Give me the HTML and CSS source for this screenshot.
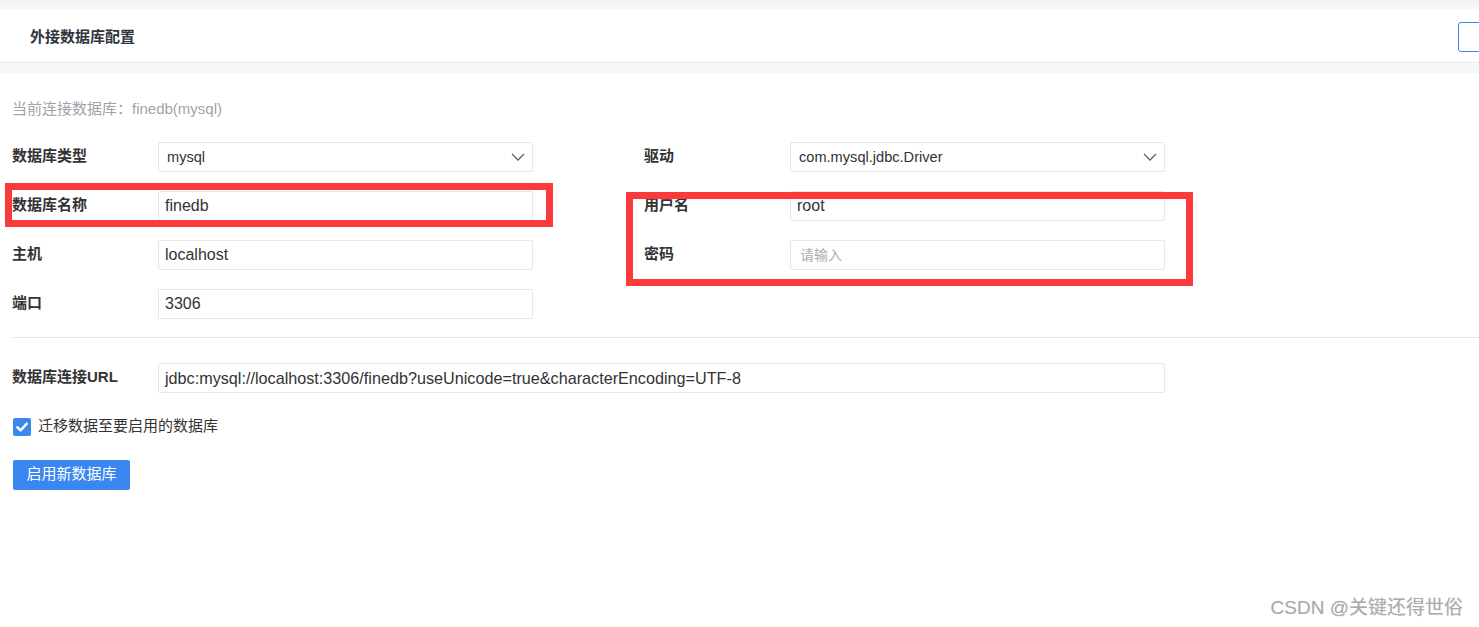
FILE: index.html
```html
<!DOCTYPE html>
<html lang="zh-CN">
<head>
<meta charset="utf-8">
<title>外接数据库配置</title>
<link rel="stylesheet" href="styles.css">
</head>
<body>
<div class="topbar"></div>
<header class="header">
  <div class="title">外接数据库配置</div>
  <button class="header-btn" type="button"></button>
</header>
<div class="band"></div>
<main class="content">
  <div class="current">当前连接数据库：finedb(mysql)</div>
  <div class="form-grid">
    <div class="field">
      <label class="label">数据库类型</label>
      <div class="select"><span>mysql</span>
        <svg class="chev" width="14" height="8" viewBox="0 0 14 8"><polyline points="1,1 7,7 13,1" fill="none" stroke="#56657a" stroke-width="1.3"/></svg>
      </div>
    </div>
    <div class="field right">
      <label class="label">驱动</label>
      <div class="select"><span>com.mysql.jdbc.Driver</span>
        <svg class="chev" width="14" height="8" viewBox="0 0 14 8"><polyline points="1,1 7,7 13,1" fill="none" stroke="#56657a" stroke-width="1.3"/></svg>
      </div>
    </div>
    <div class="field">
      <label class="label">数据库名称</label>
      <div class="input">finedb</div>
    </div>
    <div class="field right">
      <label class="label">用户名</label>
      <div class="input">root</div>
    </div>
    <div class="field">
      <label class="label">主机</label>
      <div class="input">localhost</div>
    </div>
    <div class="field right">
      <label class="label">密码</label>
      <div class="input placeholder">请输入</div>
    </div>
    <div class="field">
      <label class="label">端口</label>
      <div class="input">3306</div>
    </div>
  </div>
  <div class="divider"></div>
  <div class="field url-field">
    <label class="label">数据库连接URL</label>
    <div class="input url">jdbc:mysql://localhost:3306/finedb?useUnicode=true&amp;characterEncoding=UTF-8</div>
  </div>
  <div class="check-row">
    <span class="checkbox">
      <svg width="18" height="18" viewBox="0 0 18 18"><polyline points="4.2,9.2 7.6,12.4 13.8,5.6" fill="none" stroke="#fff" stroke-width="2.4" stroke-linecap="round" stroke-linejoin="round"/></svg>
    </span>
    <span class="check-text">迁移数据至要启用的数据库</span>
  </div>
  <button class="primary" type="button">启用新数据库</button>
</main>
<div class="mark mark-1"></div>
<div class="mark mark-2"></div>
<div class="watermark">CSDN @关键还得世俗</div>
</body>
</html>
```
FILE: styles.css
```css
* { box-sizing: border-box; }
html, body {
  margin: 0;
  padding: 0;
  background: #fff;
  overflow: hidden;
}
body {
  width: 1479px;
  height: 627px;
  position: relative;
  font-family: "Liberation Sans", "Noto Sans CJK SC", sans-serif;
  color: #333;
}
.topbar {
  height: 9px;
  background: linear-gradient(#f3f3f4, #f8f8f9);
}
.header {
  height: 54px;
  display: flex;
  align-items: flex-start;
  overflow: hidden;
  border-bottom: 1px solid #e6e7ec;
  padding-left: 30px;
}
.title {
  margin-top: 18px;
  font-size: 15px;
  line-height: 20px;
  font-weight: bold;
  color: #2f3440;
}
.header-btn {
  margin-left: auto;
  margin-top: 13px;
  margin-right: -59px;
  width: 80px;
  height: 30px;
  flex-shrink: 0;
  background: #fff;
  border: 1px solid #3a85f4;
  border-radius: 3px;
  padding: 0;
}
.band {
  height: 10px;
  background: #f6f7f9;
}
.content {
  padding: 26px 0 0 12px;
}
.current {
  font-size: 15px;
  line-height: 20px;
  color: #a0a4aa;
}
.form-grid {
  margin-top: 23px;
  display: grid;
  grid-template-columns: 521px 521px;
  column-gap: 111px;
  row-gap: 19px;
}
.field {
  display: flex;
  align-items: center;
  height: 30px;
}
.label {
  width: 146px;
  flex-shrink: 0;
  font-size: 15px;
  line-height: 20px;
  padding-bottom: 2px;
  font-weight: bold;
  color: #333;
}
.input, .select {
  width: 375px;
  height: 30px;
  border: 1px solid #e4e6ea;
  border-radius: 2px;
  display: flex;
  align-items: center;
  white-space: nowrap;
}
.input {
  padding-left: 6px;
  font-size: 16px;
  color: #333;
}
.input.placeholder {
  font-size: 14px;
  color: #a9adb4;
  padding-left: 9px;
  padding-bottom: 2px;
}
.select {
  padding: 0 7px 0 8px;
  font-size: 14.6px;
  justify-content: space-between;
  color: #333;
}
.chev { display: block; }
.divider {
  margin-top: 18px;
  height: 1px;
  background: #e6e6e8;
}
.url-field {
  margin-top: 25px;
}
.input.url {
  width: 1007px;
  font-size: 16.2px;
}
.check-row {
  margin-top: 25px;
  margin-left: 1px;
  display: flex;
  align-items: center;
  height: 18px;
}
.checkbox {
  width: 18px;
  height: 18px;
  border-radius: 2px;
  background: #3b87f0;
  display: block;
  flex-shrink: 0;
}
.checkbox svg { display: block; }
.check-text {
  margin-left: 7px;
  font-size: 15px;
  line-height: 20px;
  padding-bottom: 2px;
  color: #333;
}
.primary {
  margin-top: 24px;
  margin-left: 1px;
  display: block;
  width: 117px;
  height: 30px;
  border: none;
  border-radius: 2px;
  background: #3a87f2;
  color: #fff;
  font-family: "Liberation Sans", "Noto Sans CJK SC", sans-serif;
  font-size: 15px;
  line-height: 20px;
  padding: 0 0 2px 0;
}
.mark {
  position: absolute;
  border: 7px solid #fb3a3b;
  pointer-events: none;
}
.mark-1 {
  left: 5px;
  top: 183px;
  width: 548px;
  height: 44px;
}
.mark-2 {
  left: 626px;
  top: 192px;
  width: 567px;
  height: 94px;
}
.watermark {
  position: absolute;
  right: 16px;
  top: 596px;
  font-size: 19px;
  line-height: 24px;
  color: #ababab;
  text-shadow: 0 0 1px #ddd;
  white-space: nowrap;
}
```
